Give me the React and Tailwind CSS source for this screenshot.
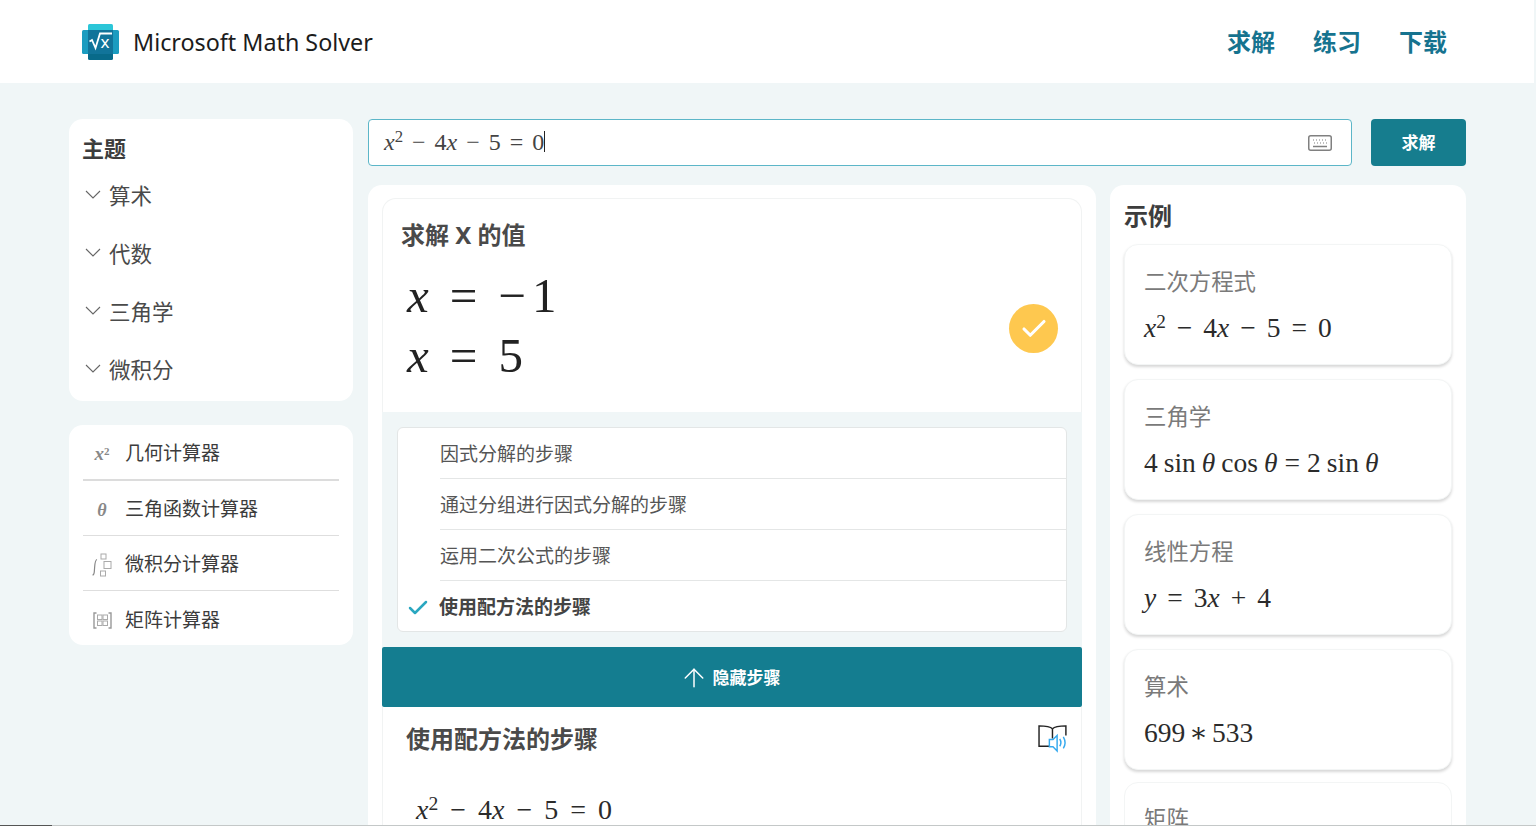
import React from "react";
import { Check, ArrowUp } from "lucide-react";

const CJK = "font-['Noto_Sans','Noto_Sans_CJK_SC',sans-serif]";
const MATH = "font-['Liberation_Serif','DejaVu_Serif',serif]";

function I({ children }) {
  return <span className="italic">{children}</span>;
}

function Quad({ gap = "gap-[0.3em]", supClass = "text-[0.7em] -translate-y-[0.45em]" }) {
  return (
    <span className={`inline-flex items-baseline ${gap}`}>
      <span className="inline-flex items-baseline">
        <I>x</I>
        <span className={`inline-block ${supClass}`}>2</span>
      </span>
      <span>−</span>
      <span><span>4</span><I>x</I></span>
      <span>−</span>
      <span>5</span>
      <span>=</span>
      <span>0</span>
    </span>
  );
}

function Logo() {
  return (
    <svg width="38" height="38" viewBox="0 0 38 38" className="shrink-0">
      <rect x="6" y="1" width="25" height="18" rx="1.5" fill="#2bc6d8" />
      <rect x="6" y="20" width="25" height="17" rx="1.5" fill="#086a8a" />
      <rect x="0" y="7" width="37" height="24" rx="1.5" fill="#1b9cc0" />
      <rect x="6" y="7" width="25" height="24" fill="#11749a" />
      <path d="M7.500 18.500L10 17l3.500 8L18 10.500h12" fill="none" stroke="#ffffff" strokeWidth="1.800" />
      <text x="18.500" y="25" fontSize="17" fill="#ffffff" fontFamily="Noto Sans">x</text>
    </svg>
  );
}

function Chevron() {
  return (
    <svg width="16" height="9" viewBox="0 0 16 9" className="shrink-0 mt-[10px] ml-[3px] mr-[8px]">
      <path d="M1 1l7 7 7-7" fill="none" stroke="#666" strokeWidth="1.100" />
    </svg>
  );
}

function KeyboardIcon() {
  return (
    <svg width="24" height="16" viewBox="0 0 24 16">
      <rect x="0.75" y="0.75" width="22.5" height="14.5" rx="2" fill="none" stroke="#808080" strokeWidth="1.5" />
      <path d="M5 11.500h14" stroke="#808080" strokeWidth="1.5" />
      <path d="M5 5h1M8 5h1M11 5h1M14 5h1M17 5h1M6 8h1M9 8h1M12 8h1M15 8h1M18 8h1" stroke="#808080" strokeWidth="1.200" />
    </svg>
  );
}

function IntegralIcon() {
  return (
    <svg width="22" height="24" viewBox="0 0 22 24">
      <path d="M1.500 22c2 0 1.700-2 2-6s.3-9 2.500-9.500" fill="none" stroke="#888" strokeWidth="1.200" />
      <rect x="10" y="1" width="5" height="5" fill="none" stroke="#aaa" strokeWidth="1" />
      <rect x="13" y="8.500" width="7" height="7" fill="none" stroke="#aaa" strokeWidth="1" />
      <rect x="9.500" y="18" width="5" height="5" fill="none" stroke="#aaa" strokeWidth="1" />
    </svg>
  );
}

function MatrixIcon() {
  return (
    <svg width="19" height="17" viewBox="0 0 19 17">
      <path d="M3.500 1H1v15h2.500M15.500 1H18v15h-2.500" fill="none" stroke="#999" strokeWidth="1.400" />
      {[4.500, 10].map((x) =>
        [3, 9].map((y) => (
          <rect key={`${x}-${y}`} x={x} y={y} width="4.500" height="4.500" fill="none" stroke="#aaa" strokeWidth="1" />
        ))
      )}
    </svg>
  );
}

function ReadAloudIcon() {
  return (
    <svg width="31" height="29" viewBox="0 0 30 28">
      <path d="M14 4.500C12 2.500 8 1.800 1 1.800V21.500h12" fill="none" stroke="#222" strokeWidth="1.400" />
      <path d="M14 4.500C16 2.500 20 1.800 27 1.800V11" fill="none" stroke="#222" strokeWidth="1.400" />
      <path d="M14 4.500V14" stroke="#222" strokeWidth="1.400" />
      <path d="M11 15h3.500l4-4v15l-4-4H11z" fill="#ffffff" stroke="#35a9ee" strokeWidth="1.400" />
      <path d="M21 14.500c1.300 2 1.300 5 0 7M24.500 12.500c2 3.500 2 8 0 11" fill="none" stroke="#35a9ee" strokeWidth="1.400" />
    </svg>
  );
}

const topics = ["算术", "代数", "三角学", "微积分"];

const tools = [
  { name: "几何计算器", icon: <span className={`${MATH} italic font-bold text-[19px] leading-none text-[#888]`}>x<sup className="text-[11px] not-italic">2</sup></span>, cls: "h-[56px] pt-[3px] border-b-2 border-[#dcdcdc]" },
  { name: "三角函数计算器", icon: <span className={`${MATH} italic font-bold text-[18px] leading-none text-[#888]`}>θ</span>, cls: "h-[55px] pt-[3px] border-b border-[#dedede]" },
  { name: "微积分计算器", icon: <IntegralIcon />, cls: "h-[55px] pt-[3px] border-b border-[#dedede]" },
  { name: "矩阵计算器", icon: <MatrixIcon />, cls: "h-[54px] pt-[4px]" },
];

const steps = ["因式分解的步骤", "通过分组进行因式分解的步骤", "运用二次公式的步骤"];

const examples = [
  { title: "二次方程式", body: <Quad gap="gap-[11px]" /> },
  {
    title: "三角学",
    body: (
      <span className="inline-flex items-baseline gap-[6px]">
        <span>4</span><span>sin</span><I>θ</I><span>cos</span><I>θ</I><span className="mx-[1px]">=</span><span>2</span><span>sin</span><I>θ</I>
      </span>
    ),
  },
  {
    title: "线性方程",
    body: (
      <span className="inline-flex items-baseline gap-[11px]">
        <I>y</I><span>=</span><span>3<I>x</I></span><span>+</span><span>4</span>
      </span>
    ),
  },
  {
    title: "算术",
    body: (
      <span className="inline-flex items-baseline gap-[4px]">
        <span>699</span><span>∗</span><span>533</span>
      </span>
    ),
  },
];

function ExampleCard({ title, body }) {
  return (
    <div className="h-[121px] shrink-0 rounded-[14px] bg-white border border-[#f3f5f5] shadow-[0_2px_3px_rgba(0,0,0,0.16)] pl-[19px] pt-[21px]">
      <div className="text-[22.400px] leading-[32px] text-[#7a7a7a]">{title}</div>
      <div className={`${MATH} mt-[14px] text-[27.500px] leading-[32px] text-[#2b2b2b]`}>{body}</div>
    </div>
  );
}

export default function App() {
  return (
    <div className={`${CJK} h-[826px] w-full overflow-hidden flex flex-col bg-[#f0f6f7]`}>
      <header className="h-[83px] w-[1534px] shrink-0 bg-white flex items-center pt-[1px] pl-[82px] pr-[87px]">
        <Logo />
        <span className="ml-[13px] text-[23.300px] leading-[32px] text-[#1c1c1c] font-['Noto_Sans',sans-serif]">Microsoft Math Solver</span>
        <nav className="ml-auto flex gap-[38px] text-[24px] font-bold text-[#16738f]">
          <span>求解</span>
          <span>练习</span>
          <span>下载</span>
        </nav>
      </header>

      <main className="flex-1 min-h-0 flex gap-[15px] pl-[69px] pt-[36px] overflow-hidden">
        <aside className="w-[284px] shrink-0 flex flex-col gap-[24px]">
          <section className="h-[282px] rounded-[14px] bg-white pl-[13px] pt-[13px]">
            <h2 className="text-[22px] leading-[32px] font-bold text-[#3d3d3d]">主题</h2>
            <ul className="mt-[16px]">
              {topics.map((t) => (
                <li key={t} className="h-[58px] last:h-[33px] flex items-start text-[21.500px] leading-[32px] text-[#4a4a4a]">
                  <Chevron />
                  {t}
                </li>
              ))}
            </ul>
          </section>
          <section className="h-[220px] rounded-[14px] bg-white px-[14px]">
            {tools.map((t) => (
              <div key={t.name} className={`${t.cls} flex items-center text-[19px] text-[#3c3c3c]`}>
                <span className="w-[42px] pr-[4px] flex justify-center">{t.icon}</span>
                {t.name}
              </div>
            ))}
          </section>
        </aside>

        <div className="w-[1098px] shrink-0 flex flex-col">
          <div className="flex gap-[19px] h-[47px] shrink-0">
            <div className="w-[984px] rounded-[4px] border border-[#5cb6c8] bg-white flex items-center pl-[15px] pr-[19px] pb-[2px]">
              <span className={`${MATH} text-[24px] text-[#444] flex items-baseline`}>
                <Quad gap="gap-[9px]" />
                <span className="inline-block w-px h-[21px] bg-[#222] self-center" />
              </span>
              <span className="ml-auto flex translate-y-[1px]"><KeyboardIcon /></span>
            </div>
            <button className="w-[95px] rounded-[4px] bg-[#167d8e] text-white text-[17px] font-bold">求解</button>
          </div>

          <div className="flex gap-[14px] mt-[19px] flex-1 min-h-0">
            <section className="w-[728px] rounded-t-[14px] bg-white px-[14px] pt-[13px]">
              <div className="h-[214px] rounded-t-[14px] border border-b-0 border-[#f1f3f3] bg-white pl-[18px] pt-[18px] pr-[23px] flex">
                <div>
                  <h3 className="text-[24px] leading-[36px] font-bold text-[#4a4a4a]">求解 X 的值</h3>
                  <div className={`${MATH} text-[49px] leading-[60px] text-[#222] mt-[13px] pl-[6px]`}>
                    <div className="flex gap-[21px] items-baseline"><I>x</I><span>=</span><span className="flex gap-[6px] items-baseline"><span>−</span><span>1</span></span></div>
                    <div className="flex gap-[21px] items-baseline"><I>x</I><span>=</span><span>5</span></div>
                  </div>
                </div>
                <div className="ml-auto mt-[87px] w-[49px] h-[49px] rounded-full bg-[#fec84f] flex items-center justify-center">
                  <Check className="w-[30px] h-[30px] text-white" strokeWidth={2.500} />
                </div>
              </div>

              <div className="bg-[#f0f6f7] h-[235px] px-[15px] pt-[15px]">
                <div className="h-[205px] rounded-[6px] bg-white border border-[#e3e6e6]">
                  {steps.map((s) => (
                    <div key={s} className="h-[51px] ml-[42px] pt-[2px] border-b border-[#e4e6e6] flex items-center text-[19px] text-[#555]">{s}</div>
                  ))}
                  <div className="h-[51px] pt-[2px] flex items-center text-[19px] font-bold text-[#444]">
                    <Check className="w-[24px] h-[24px] ml-[8px] mr-[9px] text-[#2aa7c0]" strokeWidth={2.500} />
                    使用配方法的步骤
                  </div>
                </div>
              </div>

              <button className="w-full h-[60px] rounded-[2px] bg-[#147d90] text-white flex items-center justify-center gap-[4px] pr-[5px] pt-[2px] text-[17px] font-bold">
                <ArrowUp className="w-[30px] h-[30px]" strokeWidth={1.200} />
                隐藏步骤
              </button>

              <div className="border-x border-[#f1f3f3] h-[200px] pl-[23px] pr-[12px]">
                <div className="flex items-center justify-between h-[64px]">
                  <h3 className="text-[24px] font-bold text-[#4a4a4a]">使用配方法的步骤</h3>
                  <span className="flex -translate-y-[1px]"><ReadAloudIcon /></span>
                </div>
                <div className={`${MATH} text-[28px] leading-[32px] text-[#2b2b2b] mt-[23px] pl-[10px]`}>
                  <Quad gap="gap-[12px]" />
                </div>
              </div>
            </section>

            <section className="w-[356px] rounded-t-[14px] bg-white pl-[14px] pr-[14px] pt-[13px] flex flex-col overflow-hidden">
              <h2 className="text-[24px] leading-[36px] font-bold text-[#3d3d3d]">示例</h2>
              <div className="mt-[10px] flex flex-col gap-[14px]">
                {examples.map((e) => (
                  <ExampleCard key={e.title} title={e.title} body={e.body} />
                ))}
                <div className="h-[121px] shrink-0 -mt-[2px] rounded-[14px] bg-white border border-[#f3f5f5] pl-[19px] pt-[20px] text-[22.400px] leading-[32px] text-[#7a7a7a]">矩阵</div>
              </div>
            </section>
          </div>
        </div>
      </main>
      <div className="h-px shrink-0 flex bg-[#c4c8c8]">
        <div className="w-[52px] bg-[#555]" />
      </div>
    </div>
  );
}
